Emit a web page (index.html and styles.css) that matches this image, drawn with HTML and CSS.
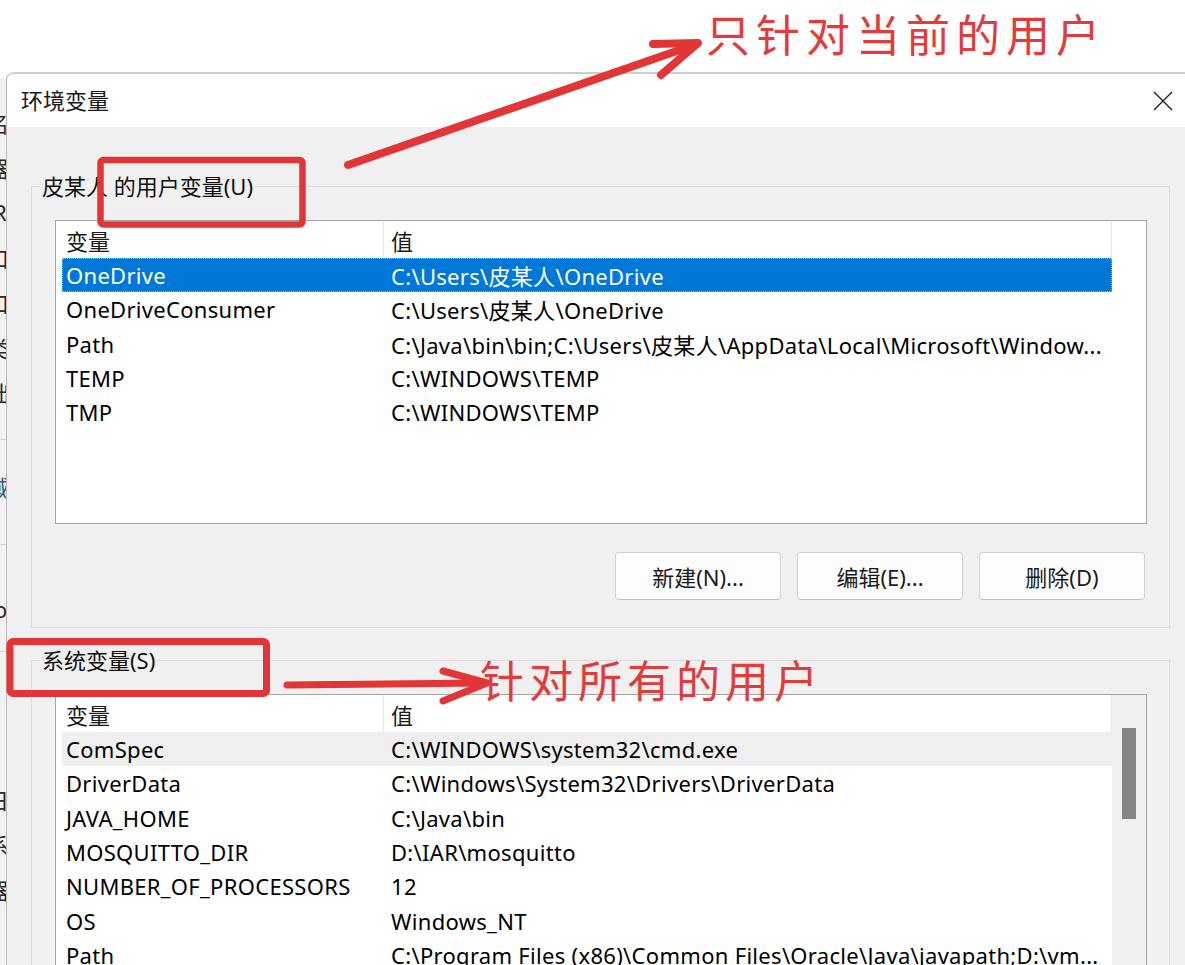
FILE: index.html
```html
<!DOCTYPE html>
<html lang="zh-CN">
<head>
<meta charset="utf-8">
<title>环境变量</title>
<link rel="stylesheet" href="styles.css">
</head>
<body>
<div class="screen">
  <div class="desk-top"></div>
  <div class="desk">
    <div class="bg-window">
      <div class="bg-block bg-block-1">
        <div class="bg-ch">名</div>
        <div class="bg-ch">器</div>
        <div class="bg-ch bg-latin">R</div>
        <div class="bg-ch">口</div>
        <div class="bg-ch">口</div>
        <div class="bg-ch">类</div>
        <div class="bg-ch">拙</div>
      </div>
      <div class="bg-sep bg-sep-1"></div>
      <div class="bg-ch bg-link">域</div>
      <div class="bg-sep bg-sep-2"></div>
      <div class="bg-ch bg-latin bg-o">o</div>
      <div class="bg-sep bg-sep-3"></div>
      <div class="bg-block bg-block-2">
        <div class="bg-ch">日</div>
        <div class="bg-ch">系</div>
        <div class="bg-ch">器</div>
      </div>
    </div>

    <div class="dialog">
      <div class="titlebar">
        <span class="title">环境变量</span>
        <svg class="close" width="20" height="20" viewBox="0 0 20 20" aria-label="关闭">
          <path d="M1 1 L19 19 M19 1 L1 19" fill="none" stroke="#1f1f1f" stroke-width="1.4"/>
        </svg>
      </div>

      <div class="dialog-body">
        <section class="group group-user">
          <div class="group-label">皮某人 的用户变量(U)</div>
          <div class="list list-user">
            <div class="list-main">
              <div class="list-head">
                <div class="hc hc-name">变量</div>
                <div class="hc hc-val">值</div>
              </div>
              <div class="row selected"><div class="c c-name">OneDrive</div><div class="c c-val">C:\Users\皮某人\OneDrive</div></div>
              <div class="row"><div class="c c-name">OneDriveConsumer</div><div class="c c-val">C:\Users\皮某人\OneDrive</div></div>
              <div class="row"><div class="c c-name">Path</div><div class="c c-val">C:\Java\bin\bin;C:\Users\皮某人\AppData\Local\Microsoft\Window...</div></div>
              <div class="row"><div class="c c-name">TEMP</div><div class="c c-val">C:\WINDOWS\TEMP</div></div>
              <div class="row"><div class="c c-name">TMP</div><div class="c c-val">C:\WINDOWS\TEMP</div></div>
            </div>
          </div>
          <div class="buttons">
            <button class="btn">新建(N)...</button>
            <button class="btn">编辑(E)...</button>
            <button class="btn">删除(D)</button>
          </div>
        </section>

        <section class="group group-sys">
          <div class="group-label">系统变量(S)</div>
          <div class="list list-sys">
            <div class="list-main">
              <div class="list-head">
                <div class="hc hc-name">变量</div>
                <div class="hc hc-val">值</div>
              </div>
              <div class="row hover"><div class="c c-name">ComSpec</div><div class="c c-val">C:\WINDOWS\system32\cmd.exe</div></div>
              <div class="row"><div class="c c-name">DriverData</div><div class="c c-val">C:\Windows\System32\Drivers\DriverData</div></div>
              <div class="row"><div class="c c-name">JAVA_HOME</div><div class="c c-val">C:\Java\bin</div></div>
              <div class="row"><div class="c c-name">MOSQUITTO_DIR</div><div class="c c-val">D:\IAR\mosquitto</div></div>
              <div class="row"><div class="c c-name">NUMBER_OF_PROCESSORS</div><div class="c c-val">12</div></div>
              <div class="row"><div class="c c-name">OS</div><div class="c c-val">Windows_NT</div></div>
              <div class="row"><div class="c c-name">Path</div><div class="c c-val">C:\Program Files (x86)\Common Files\Oracle\Java\javapath;D:\vm...</div></div>
            </div>
            <div class="scrollbar"><div class="thumb"></div></div>
          </div>
        </section>
      </div>
    </div>
  </div>

  <svg class="annot" width="1185" height="965" viewBox="0 0 1185 965">
    <g fill="none" stroke="#e23535" stroke-linecap="round" stroke-linejoin="round">
      <rect x="100.5" y="160" width="202" height="64.5" rx="3" stroke-width="6.5"/>
      <rect x="10" y="641.5" width="256.5" height="52" rx="3" stroke-width="7"/>
      <path d="M348 165 L697 44" stroke-width="8"/>
      <path d="M653 44 L698 43 L661 75" stroke-width="8"/>
      <path d="M287 685 L484 683" stroke-width="7"/>
      <path d="M443 671 L487 683 L443 701" stroke-width="7"/>
    </g>
  </svg>
  <div class="note note-1">只针对当前的用户</div>
  <div class="note note-2">针对所有的用户</div>
</div>
</body>
</html>
```

FILE: styles.css
```css
html, body {
  margin: 0;
  padding: 0;
  background: #ffffff;
}

body {
  font-family: "Noto Sans", "Noto Sans CJK SC", sans-serif;
  color: #000;
}

.screen {
  position: relative;
  width: 1185px;
  height: 965px;
  overflow: hidden;
  background: #ffffff;
}

.desk-top {
  height: 72px;
}

.desk {
  display: flex;
  height: 893px;
}

/* background window sliver on the left */
.bg-window {
  width: 6px;
  margin-top: 6px;
  background: #f2f2f2;
  overflow: hidden;
  color: #2a2a2a;
  font-family: "Noto Sans CJK SC", sans-serif;
  font-size: 22px;
}

.bg-block-1 {
  padding-top: 22px;
}

.bg-ch {
  height: 45px;
  line-height: 45px;
  margin-left: -13px;
  white-space: nowrap;
}

.bg-latin {
  margin-left: -7px;
  font-family: "Noto Sans", sans-serif;
}

.bg-sep {
  height: 1px;
  background: #d4d4d4;
}

.bg-sep-1 { margin-top: 24px; }
.bg-link { margin-top: 24px; color: #2b5f80; }
.bg-sep-2 { margin-top: 35px; }
.bg-o { margin-top: 42px; margin-left: -6px; }
.bg-sep-3 { margin-top: 19px; }
.bg-block-2 { margin-top: 125px; }

/* dialog */
.dialog {
  flex: 1;
  display: flex;
  flex-direction: column;
  background: #f0f0f0;
  border-top: 2px solid #cdcdcd;
  border-left: 1px solid #bababa;
  border-top-left-radius: 8px;
  overflow: hidden;
}

.titlebar {
  height: 53px;
  flex: none;
  background: #ffffff;
  display: flex;
  align-items: center;
  justify-content: space-between;
  padding: 0 12px 0 14px;
}

.title {
  font-size: 22px;
  color: #1a1a1a;
  line-height: 30px;
  margin-top: -2px;
}

.close {
  display: block;
}

.dialog-body {
  flex: 1;
  padding-top: 59px;
}

.group {
  margin: 0 15px 0 24px;
  border: 1px solid #dadada;
  padding: 0 22px 27px 23px;
}

.group-sys {
  margin-top: 32px;
  padding-bottom: 0;
}

.group-label {
  width: fit-content;
  height: 30px;
  line-height: 30px;
  margin: -16px 0 19px -15px;
  padding: 0 2px;
  background: #f0f0f0;
  font-size: 22px;
  color: #111;
  white-space: nowrap;
}

.list {
  display: flex;
  background: #ffffff;
  border: 1px solid #a5a5a5;
  box-sizing: border-box;
  overflow: hidden;
}

.list-user {
  height: 304px;
}

.list-sys {
  height: 420px;
}

.list-main {
  width: 1056px;
  flex: none;
}

.list-head {
  display: flex;
  height: 37px;
  font-size: 22px;
  color: #1a1a1a;
}

.hc {
  box-sizing: border-box;
  display: flex;
  align-items: center;
}

.hc-name {
  width: 327px;
  padding-left: 10px;
}

.hc-val {
  flex: 1;
  padding-left: 7px;
  border-left: 1px solid #e6e6e6;
  border-right: 1px solid #e6e6e6;
}

.row {
  display: flex;
  align-items: center;
  height: 34.3px;
  margin-left: 6px;
  font-size: 22px;
  letter-spacing: 0.3px;
  color: #000;
  box-sizing: border-box;
}

.row.selected {
  background: #0078d7;
  color: #ffffff;
  outline: 1px dotted #f0a35a;
  outline-offset: -1px;
}

.row.hover {
  background: #efefef;
}

.c {
  box-sizing: border-box;
  white-space: nowrap;
  overflow: hidden;
  text-overflow: ellipsis;
}

.c-name {
  width: 321px;
  flex: none;
  padding-left: 4px;
}

.c-val {
  flex: 1;
  min-width: 0;
  padding-left: 8px;
}

.scrollbar {
  flex: 1;
  background: #f0f0f0;
}

.thumb {
  width: 14px;
  height: 91px;
  margin: 33px 0 0 10px;
  background: #858585;
}

.buttons {
  display: flex;
  justify-content: flex-end;
  gap: 16px;
  margin: 28px 2px 0 0;
}

.btn {
  width: 166px;
  height: 48px;
  box-sizing: border-box;
  border: 1px solid #d3d3d3;
  border-bottom-color: #bfbfbf;
  border-radius: 4px;
  background: #fdfdfd;
  font-family: "Noto Sans", "Noto Sans CJK SC", sans-serif;
  font-size: 22px;
  color: #1a1a1a;
  padding: 0;
}

/* annotations drawn over the screenshot */
.annot {
  position: absolute;
  left: 0;
  top: 0;
  pointer-events: none;
}

.note {
  position: absolute;
  color: #e33a3a;
  font-family: "Noto Sans CJK SC", sans-serif;
  font-weight: 400;
  line-height: 1;
  white-space: nowrap;
}

.note-1 {
  left: 706px;
  top: 11px;
  font-size: 44px;
  letter-spacing: 6px;
}

.note-2 {
  left: 480px;
  top: 657px;
  font-size: 44px;
  letter-spacing: 5px;
}
```
